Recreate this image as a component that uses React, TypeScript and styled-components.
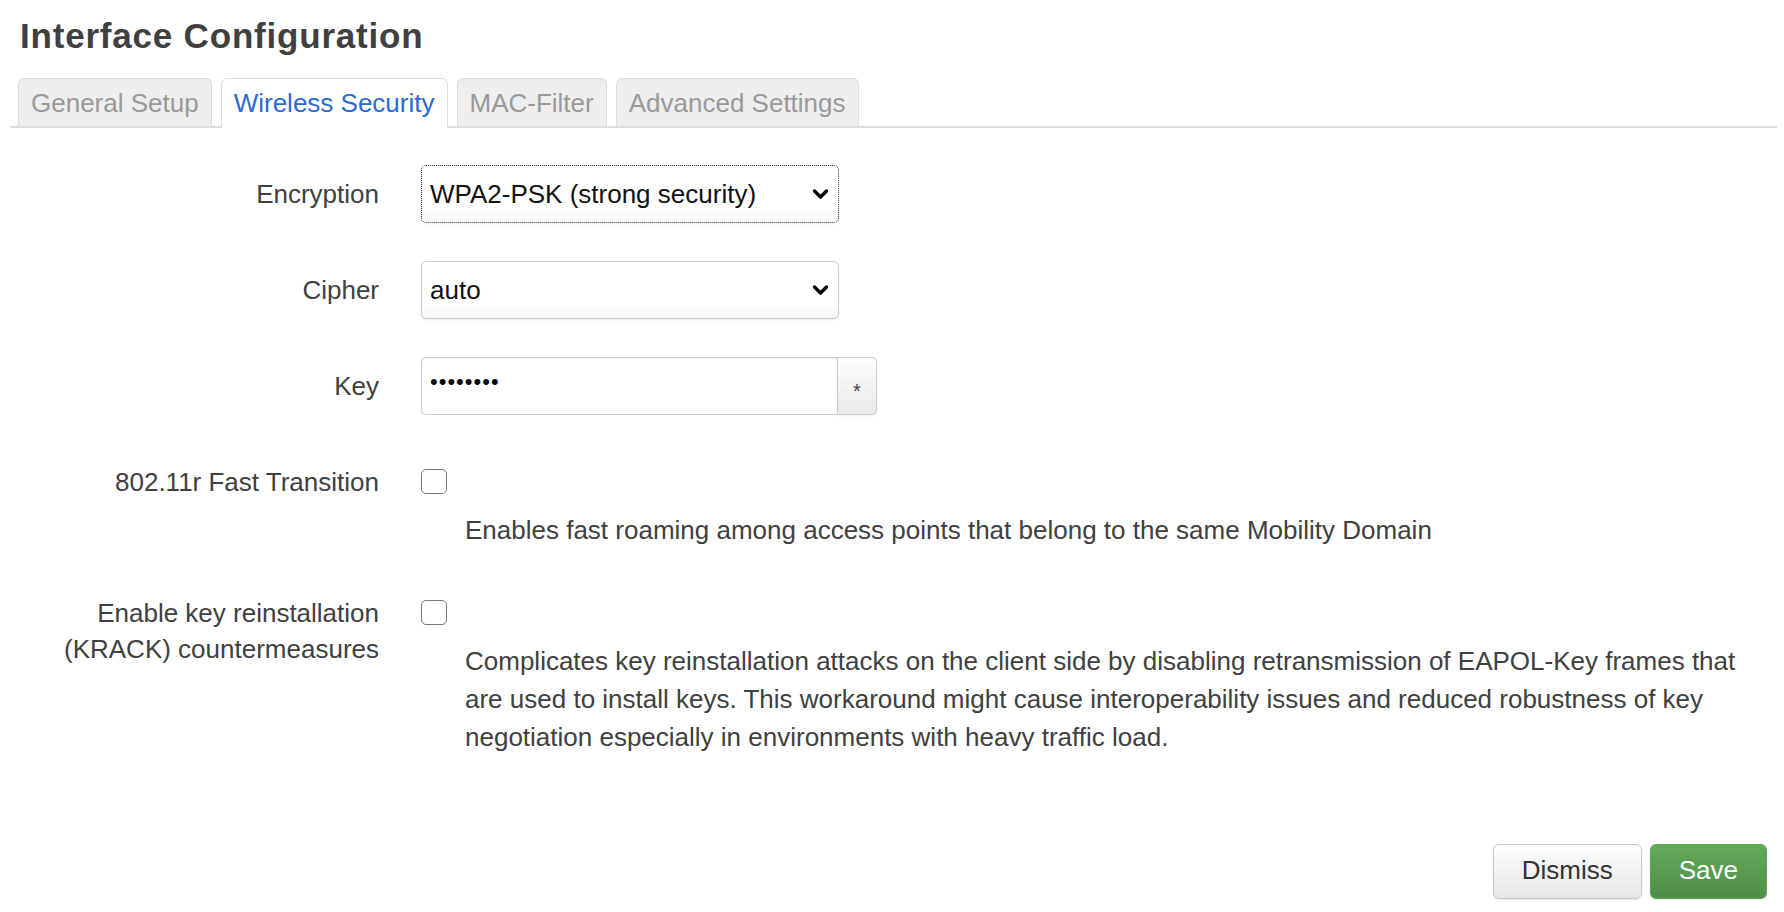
import React from "react";
import styled, { createGlobalStyle, css } from "styled-components";

const GlobalStyle = createGlobalStyle`
  html, body {
    margin: 0;
    padding: 0;
    background: #ffffff;
  }
  body {
    font-family: "Liberation Sans", Arial, Helvetica, sans-serif;
    color: #404040;
  }
  * { box-sizing: border-box; }
`;

const Page = styled.div`
  width: 1784px;
  height: 912px;
  padding: 15px 7px 0 10px;
  overflow: hidden;
`;

const Title = styled.h2`
  margin: 0 0 0 10px;
  font-size: 35px;
  line-height: 42px;
  font-weight: bold;
  letter-spacing: 0.8px;
  color: #404040;
`;

const TabBar = styled.ul`
  list-style: none;
  margin: 21px 0 0 0;
  padding: 0 0 0 8px;
  display: flex;
  gap: 9px;
  border-bottom: 2px solid #dddddd;
  height: 50px;
`;

const Tab = styled.li<{ $active?: boolean }>`
  height: 48px;
  padding: 6px 12px 0 12px;
  font-size: 26px;
  line-height: 37px;
  border: 1px solid #dddddd;
  border-bottom: none;
  border-radius: 6px 6px 0 0;
  background: #eeeeee;
  color: #999999;
  white-space: nowrap;
  ${(p) =>
    p.$active &&
    css`
      background: #ffffff;
      color: #2a6ad4;
      height: 50px;
    `}
`;

const Form = styled.div`
  margin-top: 37px;
  display: flex;
  flex-direction: column;
  gap: 38px;
`;

const Row = styled.div`
  display: grid;
  grid-template-columns: 359px 1fr;
  column-gap: 42px;
  margin-left: 10px;
`;

const Label = styled.div`
  text-align: right;
  padding-top: 11px;
  font-size: 26px;
  line-height: 36px;
  color: #404040;
`;

const Field = styled.div`
  display: flex;
  flex-direction: column;
`;

const ControlLine = styled.div`
  height: 58px;
  display: flex;
  align-items: center;
`;

const SelectBox = styled.div<{ $focused?: boolean }>`
  width: 418px;
  height: 58px;
  display: flex;
  align-items: center;
  justify-content: space-between;
  padding: 0 9px 0 8px;
  border: 1px solid #cccccc;
  border-radius: 5px;
  background: linear-gradient(#ffffff 0%, #ffffff 75%, #f6f6f6 100%);
  box-shadow: 0 1px 2px rgba(0, 0, 0, 0.08);
  font-size: 26px;
  color: #111111;
  ${(p) =>
    p.$focused &&
    css`
      border: 1px dotted #333333;
    `}
`;

const Chevron = styled.svg`
  width: 17px;
  height: 12px;
  flex: none;
`;

const KeyGroup = styled.div`
  display: flex;
  height: 58px;
`;

const KeyInput = styled.input`
  width: 416px;
  height: 58px;
  border: 1px solid #cccccc;
  border-right: none;
  border-radius: 5px 0 0 5px;
  padding: 0 0 8px 8px;
  font-family: "Liberation Sans", Arial, sans-serif;
  font-size: 22px;
  letter-spacing: 1px;
  color: #000000;
  background: #ffffff;
  box-shadow: inset 0 1px 2px rgba(0, 0, 0, 0.06);
  outline: none;
`;

const KeyButton = styled.button`
  width: 40px;
  height: 58px;
  border: 1px solid #cccccc;
  border-radius: 0 5px 5px 0;
  background: linear-gradient(#ffffff, #e8e8e8);
  box-shadow: 0 1px 2px rgba(0, 0, 0, 0.08);
  font-family: "Liberation Sans", Arial, sans-serif;
  font-size: 20px;
  color: #404040;
  padding: 10px 0 0 0;
  cursor: pointer;
`;

const CheckBox = styled.span`
  display: inline-block;
  width: 26px;
  height: 25px;
  border: 1.5px solid #767676;
  border-radius: 5px;
  background: #ffffff;
  margin-top: -2px;
`;

const Description = styled.div<{ $last?: boolean }>`
  padding-left: 44px;
  font-size: 26px;
  line-height: 38px;
  color: #404040;
  margin-bottom: ${(p) => (p.$last ? "0" : "-3px")};
`;

const Actions = styled.div`
  margin-top: 88px;
  display: flex;
  justify-content: flex-end;
  gap: 8px;
  padding-right: 10px;
`;

const Button = styled.button<{ $primary?: boolean }>`
  height: 55px;
  padding: 0 28px 3px 28px;
  font-family: "Liberation Sans", Arial, sans-serif;
  font-size: 26px;
  border-radius: 6px;
  cursor: pointer;
  border: 1px solid #c8c8c8;
  background: linear-gradient(#ffffff, #e6e6e6);
  color: #333333;
  box-shadow: 0 1px 2px rgba(0, 0, 0, 0.1);
  ${(p) =>
    p.$primary &&
    css`
      border: 1px solid #5aa952;
      background: linear-gradient(#62ab5a, #4f8d48);
      color: #ffffff;
    `}
`;

const ChevronIcon = () => (
  <Chevron viewBox="0 0 17 12">
    <polyline
      points="2.5,3 8.5,9 14.5,3"
      fill="none"
      stroke="#000"
      strokeWidth="3.4"
      strokeLinecap="round"
      strokeLinejoin="round"
    />
  </Chevron>
);

export default function App() {
  return (
    <>
      <GlobalStyle />
      <Page>
        <Title>Interface Configuration</Title>
        <TabBar>
          <Tab>General Setup</Tab>
          <Tab $active>Wireless Security</Tab>
          <Tab>MAC-Filter</Tab>
          <Tab>Advanced Settings</Tab>
        </TabBar>
        <Form>
          <Row>
            <Label>Encryption</Label>
            <Field>
              <ControlLine>
                <SelectBox $focused>
                  <span>WPA2-PSK (strong security)</span>
                  <ChevronIcon />
                </SelectBox>
              </ControlLine>
            </Field>
          </Row>
          <Row>
            <Label>Cipher</Label>
            <Field>
              <ControlLine>
                <SelectBox>
                  <span>auto</span>
                  <ChevronIcon />
                </SelectBox>
              </ControlLine>
            </Field>
          </Row>
          <Row>
            <Label>Key</Label>
            <Field>
              <KeyGroup>
                <KeyInput type="text" readOnly value="••••••••" />
                <KeyButton>*</KeyButton>
              </KeyGroup>
            </Field>
          </Row>
          <Row>
            <Label>802.11r Fast Transition</Label>
            <Field>
              <ControlLine>
                <CheckBox />
              </ControlLine>
              <Description>
                Enables fast roaming among access points that belong to the same Mobility Domain
              </Description>
            </Field>
          </Row>
          <Row>
            <Label>Enable key reinstallation (KRACK) countermeasures</Label>
            <Field>
              <ControlLine>
                <CheckBox />
              </ControlLine>
              <Description $last>
                Complicates key reinstallation attacks on the client side by disabling
                retransmission of EAPOL-Key frames that are used to install keys. This
                workaround might cause interoperability issues and reduced robustness of key
                negotiation especially in environments with heavy traffic load.
              </Description>
            </Field>
          </Row>
        </Form>
        <Actions>
          <Button>Dismiss</Button>
          <Button $primary>Save</Button>
        </Actions>
      </Page>
    </>
  );
}
